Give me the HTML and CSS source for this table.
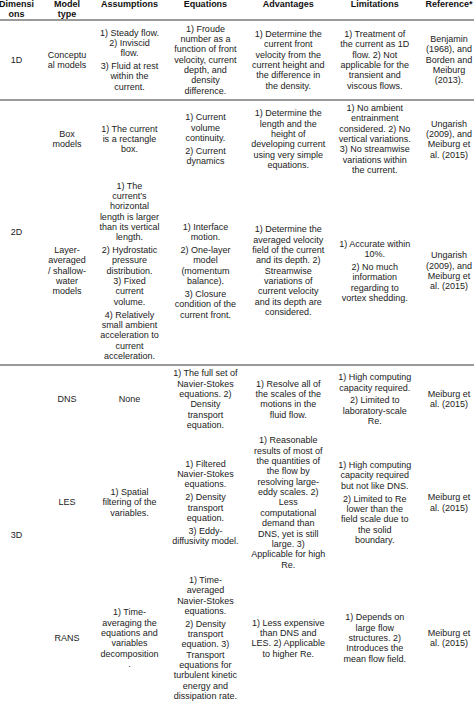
FILE: index.html
```html
<!DOCTYPE html>
<html lang="en">
<head>
<meta charset="utf-8">
<title>Gravity current models</title>
<link rel="stylesheet" href="styles.css">
</head>
<body>
<table class="models">
  <thead>
    <tr>
      <th class="c-dim">Dimensions</th>
      <th class="c-model">Model type</th>
      <th class="c-ass">Assumptions</th>
      <th class="c-eq">Equations</th>
      <th class="c-adv">Advantages</th>
      <th class="c-lim">Limitations</th>
      <th class="c-ref">Reference*</th>
    </tr>
  </thead>
  <tbody class="group">
    <tr>
      <td>1D</td>
      <td>Conceptual models</td>
      <td><p>1) Steady flow. 2) Inviscid flow.</p><p>3) Fluid at rest within the current.</p></td>
      <td>1) Froude number as a function of front velocity, current depth, and density difference.</td>
      <td>1) Determine the current front velocity from the current height and the difference in the density.</td>
      <td>1) Treatment of the current as 1D flow. 2) Not applicable for the transient and viscous flows.</td>
      <td>Benjamin (1968), and Borden and Meiburg (2013).</td>
    </tr>
  </tbody>
  <tbody class="group">
    <tr>
      <td rowspan="2">2D</td>
      <td>Box models</td>
      <td>1) The current is a rectangle box.</td>
      <td><p>1) Current volume continuity.</p><p>2) Current dynamics</p></td>
      <td>1) Determine the length and the height of developing current using very simple equations.</td>
      <td>1) No ambient entrainment considered. 2) No vertical variations. 3) No streamwise variations within the current.</td>
      <td>Ungarish (2009), and Meiburg et al. (2015)</td>
    </tr>
    <tr>
      <td>Layer-averaged / shallow-water models</td>
      <td><p>1) The current’s horizontal length is larger than its vertical length.</p><p>2) Hydrostatic pressure distribution.<br>3) Fixed current volume.</p><p>4) Relatively small ambient acceleration to current acceleration.</p></td>
      <td><p>1) Interface motion.</p><p>2) One-layer model (momentum balance).</p><p>3) Closure condition of the current front.</p></td>
      <td>1) Determine the averaged velocity field of the current and its depth. 2) Streamwise variations of current velocity and its depth are considered.</td>
      <td><p>1) Accurate within 10%.</p><p>2) No much information regarding to vortex shedding.</p></td>
      <td>Ungarish (2009), and Meiburg et al. (2015)</td>
    </tr>
  </tbody>
  <tbody class="group">
    <tr>
      <td rowspan="3">3D</td>
      <td>DNS</td>
      <td>None</td>
      <td>1) The full set of Navier-Stokes equations. 2) Density transport equation.</td>
      <td>1) Resolve all of the scales of the motions in the fluid flow.</td>
      <td><p>1) High computing capacity required.</p><p>2) Limited to laboratory-scale Re.</p></td>
      <td>Meiburg et al. (2015)</td>
    </tr>
    <tr>
      <td>LES</td>
      <td>1) Spatial filtering of the variables.</td>
      <td><p>1) Filtered Navier-Stokes equations.</p><p>2) Density transport equation.</p><p>3) Eddy-diffusivity model.</p></td>
      <td>1) Reasonable results of most of the quantities of the flow by resolving large-eddy scales. 2) Less computational demand than DNS, yet is still large. 3) Applicable for high Re.</td>
      <td><p>1) High computing capacity required but not like DNS.</p><p>2) Limited to Re lower than the field scale due to the solid boundary.</p></td>
      <td>Meiburg et al. (2015)</td>
    </tr>
    <tr>
      <td>RANS</td>
      <td>1) Time-averaging the equations and variables decomposition .</td>
      <td><p>1) Time-averaged Navier-Stokes equations.</p><p>2) Density transport equation. 3) Transport equations for turbulent kinetic energy and dissipation rate.</p></td>
      <td>1) Less expensive than DNS and LES. 2) Applicable to higher Re.</td>
      <td>1) Depends on large flow structures. 2) Introduces the mean flow field.</td>
      <td>Meiburg et al. (2015)</td>
    </tr>
  </tbody>
</table>
</body>
</html>
```

FILE: styles.css
```css
html,
body {
  margin: 0;
  padding: 0;
  background: #ffffff;
  overflow: hidden;
}

body {
  font-family: "Liberation Sans", Arial, sans-serif;
  font-size: 9px;
  line-height: 10.35px;
  color: #222222;
}

.models {
  border-collapse: collapse;
  table-layout: fixed;
  width: 488px;
  margin: -1.5px 0 0 -8px;
}

.models th,
.models td {
  box-sizing: border-box;
  padding: 2.5px 6px;
  text-align: center;
  overflow-wrap: break-word;
}

.models th {
  font-weight: bold;
  color: #111111;
  vertical-align: top;
  padding-top: 0;
  padding-bottom: 0;
}

.models td {
  vertical-align: middle;
}

.models thead tr,
.models .group {
  border-bottom: 2px solid #9a9a9a;
}

.models p {
  margin: 0;
}

.models p + p {
  margin-top: 2.5px;
}

.c-dim { width: 49px; }
.c-model { width: 52px; }
.c-ass { width: 72.8px; }
.c-eq { width: 79.2px; }
.c-adv { width: 86.5px; }
.c-lim { width: 86.5px; }
.c-ref { width: 62px; }
```
